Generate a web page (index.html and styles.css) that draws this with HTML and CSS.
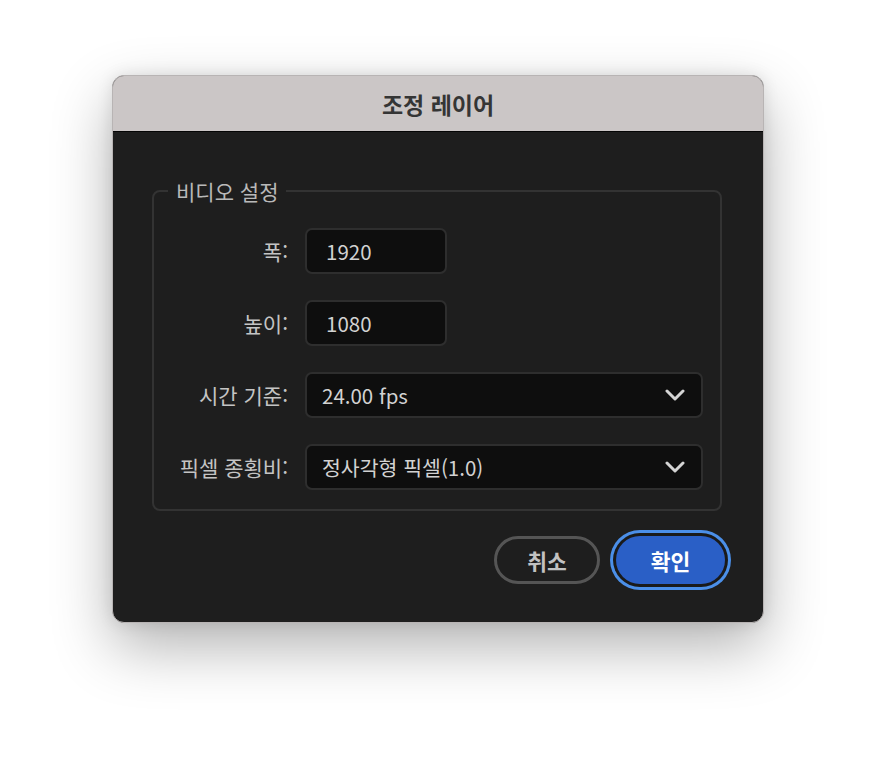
FILE: index.html
```html
<!DOCTYPE html>
<html lang="ko">
<head>
<meta charset="utf-8">
<title>조정 레이어</title>
<link rel="stylesheet" href="styles.css">
</head>
<body>
<div class="dialog">
  <div class="titlebar">조정 레이어</div>
  <div class="content">
    <fieldset class="group">
      <legend>비디오 설정</legend>
      <div class="row">
        <label class="lbl">폭:</label>
        <div class="field short">1920</div>
      </div>
      <div class="row">
        <label class="lbl">높이:</label>
        <div class="field short">1080</div>
      </div>
      <div class="row">
        <label class="lbl">시간 기준:</label>
        <div class="field select"><span>24.00 fps</span>
          <svg class="chev" width="20" height="12" viewBox="0 0 20 12"><path d="M2 2 L10 10 L18 2" fill="none" stroke="#d4d4d4" stroke-width="3" stroke-linecap="round" stroke-linejoin="round"/></svg>
        </div>
      </div>
      <div class="row">
        <label class="lbl">픽셀 종횡비:</label>
        <div class="field select"><span>정사각형 픽셀(1.0)</span>
          <svg class="chev" width="20" height="12" viewBox="0 0 20 12"><path d="M2 2 L10 10 L18 2" fill="none" stroke="#d4d4d4" stroke-width="3" stroke-linecap="round" stroke-linejoin="round"/></svg>
        </div>
      </div>
    </fieldset>
    <div class="buttons">
      <button class="btn cancel">취소</button>
      <button class="btn ok">확인</button>
    </div>
  </div>
</div>
</body>
</html>
```

FILE: styles.css
```css
html {
  margin: 0;
  padding: 0;
  background: #ffffff;
  min-height: 100%;
}
body {
  margin: 0;
  min-height: 772px;
  box-sizing: border-box;
  font-family: "Noto Sans CJK KR", "Noto Sans", sans-serif;
  padding-top: 75px;
  background: #ffffff;
}
.dialog {
  width: 652px;
  height: 548px;
  margin: 0 auto;
  box-sizing: border-box;
  border-radius: 12px;
  background: #1e1e1e;
  overflow: hidden;
  border: 1px solid #b8b4b4;
  box-shadow: 0 24px 60px rgba(0,0,0,0.30), 0 0 16px rgba(0,0,0,0.10);
  display: flex;
  flex-direction: column;
}
.titlebar {
  height: 55px;
  background: #cbc6c6;
  border-bottom: 1px solid #050505;
  color: #353535;
  font-weight: 700;
  font-size: 23px;
  display: flex;
  align-items: center;
  justify-content: center;
}
.content {
  padding: 49px 41px 0 39px;
}
.group {
  margin: 0;
  border: 2px solid #333333;
  border-radius: 8px;
  padding: 27px 17px 19px 0;
  display: flex;
  flex-direction: column;
  gap: 26px;
}
.group legend {
  margin-left: 14px;
  padding: 0 8px;
  color: #b9b9b9;
  font-size: 21px;
  line-height: 20px;
}
.row {
  display: flex;
  align-items: center;
}
.lbl {
  width: 134px;
  text-align: right;
  padding-right: 17px;
  color: #c4c4c4;
  font-size: 21px;
  white-space: nowrap;
}
.field {
  box-sizing: border-box;
  height: 46px;
  background: #0e0e0e;
  border: 2px solid #2e2e2e;
  border-radius: 7px;
  color: #d2d2d2;
  font-size: 20.5px;
  display: flex;
  align-items: center;
}
.short {
  width: 142px;
  padding-left: 19px;
}
.select {
  flex: 1;
  padding-left: 15px;
  padding-right: 16px;
  justify-content: space-between;
}
.buttons {
  display: flex;
  justify-content: flex-end;
  align-items: center;
  gap: 16px;
  padding-top: 25px;
}
.btn {
  font-family: "Noto Sans CJK KR", "Noto Sans", sans-serif;
  font-weight: 700;
  font-size: 21.5px;
  height: 48px;
  border-radius: 24px;
  box-sizing: border-box;
  cursor: pointer;
}
.cancel {
  width: 106px;
  background: transparent;
  color: #c2c2c2;
  border: 3px solid #555555;
}
.ok {
  width: 109px;
  margin-right: -3px;
  background: #2a5fc6;
  color: #ffffff;
  border: none;
  box-shadow: 0 0 0 3px #1a1a1a, 0 0 0 6px #4b8fe8;
}
```
